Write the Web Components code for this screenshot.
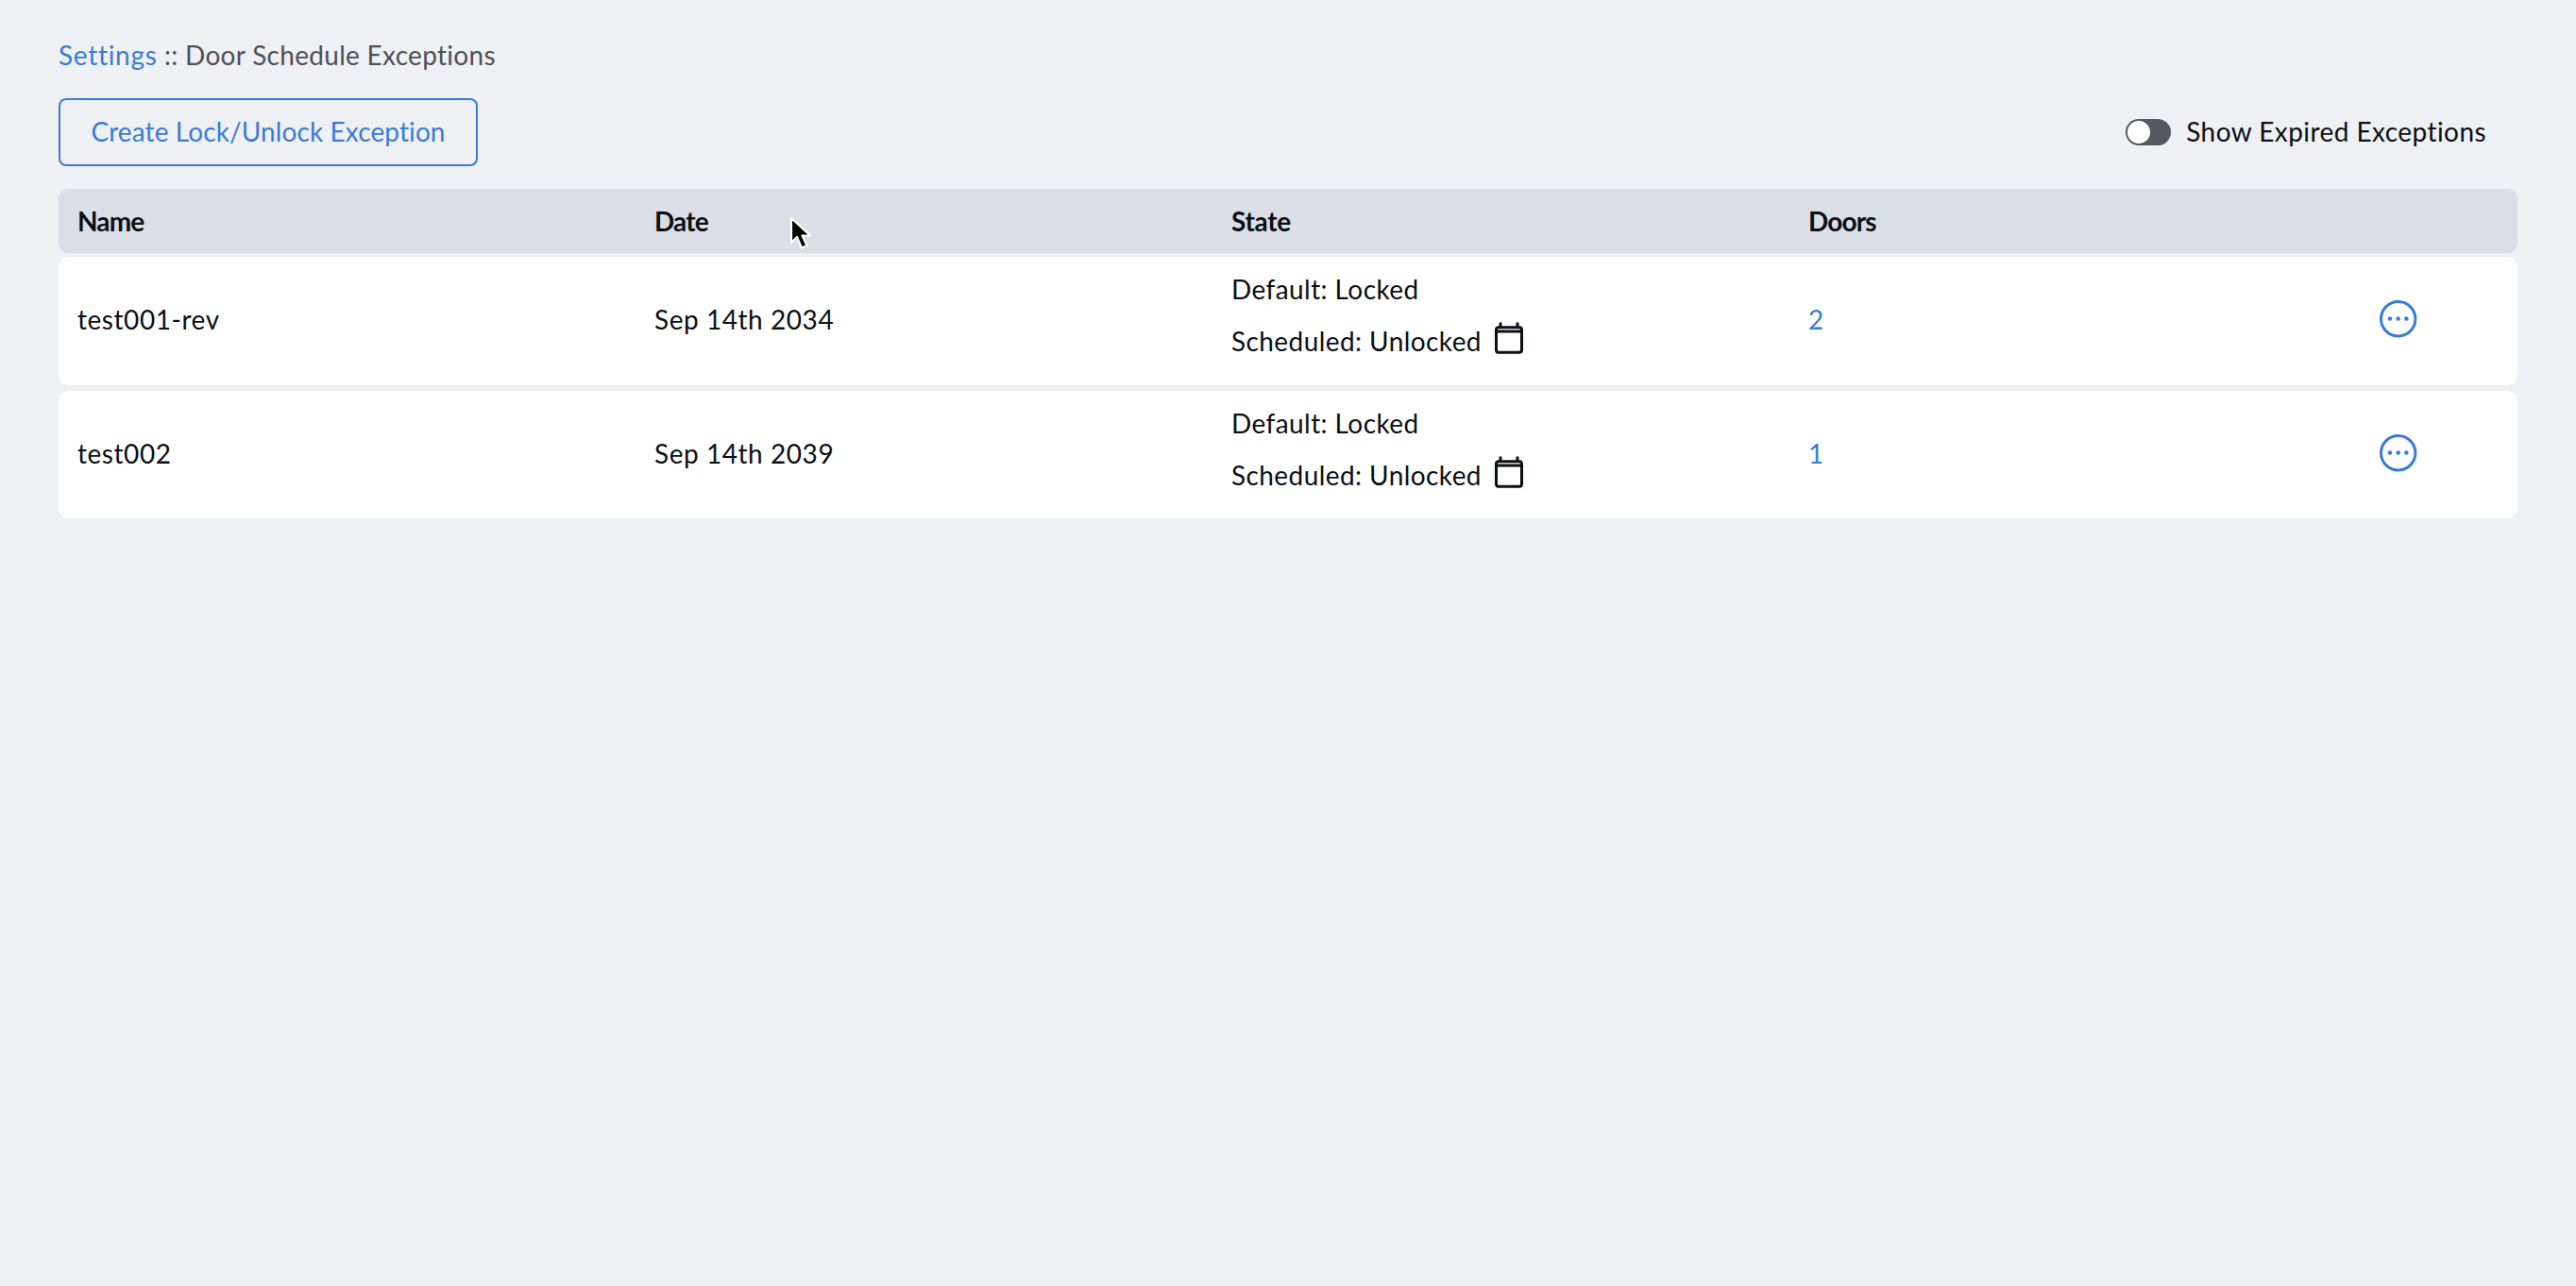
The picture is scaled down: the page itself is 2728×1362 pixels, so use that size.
<!DOCTYPE html>
<html lang="en"><head><meta charset="utf-8"><title>Door Schedule Exceptions</title>
<style>
html,body{margin:0;height:100%}
body{background:#eff0f4;font:28px/40px Lato,"Noto Sans",sans-serif;color:#0c0f14;min-height:1362px;position:relative}
</style></head><body>
<exceptions-page></exceptions-page>
<template id="row-tpl">
<style>
:host{display:grid;grid-template-columns:611px 611px 611px 605px 40px;align-items:center;background:#fff;border-radius:10px;padding:0 20px 4px;height:135.5px;box-sizing:border-box;letter-spacing:.55px}
:host(:last-child){padding-bottom:2px}
.st{display:flex;flex-direction:column;gap:15px;margin-bottom:9px;letter-spacing:.42px}
.sch{display:flex;align-items:center;gap:14px;height:40px}
.sch svg{margin-bottom:6px}
.doors{color:#3a7bd5}
svg{display:block}
</style>
<div><slot name="name"></slot></div><div><slot name="date"></slot></div>
<div class="st"><div>Default: Locked</div><div class="sch"><span>Scheduled: Unlocked</span>
<svg width="30" height="34" viewBox="0 0 30 34" fill="none" stroke="#0c0f14" stroke-width="3"><rect x="1.5" y="5.8" width="27" height="26.4" rx="2.5"/><path d="M1.5 10h27M6 .5v5M24 .5v5"/></svg></div></div>
<div class="doors"><slot name="doors"></slot></div>
<svg width="40" height="40" viewBox="0 0 40 40" fill="none"><circle cx="19.7" cy="19.7" r="18.2" stroke="#3a7bd5" stroke-width="3"/><circle cx="11" cy="19.5" r="2.3" fill="#3a7bd5"/><circle cx="19.7" cy="19.5" r="2.3" fill="#3a7bd5"/><circle cx="28.4" cy="19.5" r="2.3" fill="#3a7bd5"/></svg>
</template>
<script>
class ExceptionRow extends HTMLElement{constructor(){super();this.attachShadow({mode:'open'}).append(document.getElementById('row-tpl').content.cloneNode(true))}}
customElements.define('exception-row',ExceptionRow);
class ExceptionsPage extends HTMLElement{constructor(){super();const s=this.attachShadow({mode:'open'});s.innerHTML=`<style>
:host{display:block;padding:38px 62px 0}
.crumb{color:#4d5157;height:40px;line-height:40px;letter-spacing:.3px}.crumb a{color:#3a7bd5;text-decoration:none;letter-spacing:.7px}
.bar{display:flex;justify-content:space-between;align-items:center;margin-top:26px;padding-right:33px}
.btn{height:72px;width:444px;box-sizing:border-box;border:2px solid #3a7bd5;border-radius:8px;color:#3a7bd5;background:none;font:inherit;padding:0 0 3px;letter-spacing:.1px}
.tg{display:flex;align-items:center;gap:16px;letter-spacing:.43px}
.tg span{padding-bottom:2px}
.sw{width:48px;height:28px;border-radius:14px;background:#55585d;position:relative}
.sw:after{content:"";position:absolute;left:1.5px;top:2px;width:24.5px;height:24px;border-radius:50%;background:#fff}
.head{display:grid;grid-template-columns:611px 611px 611px 1fr;align-items:center;height:68px;background:#dbdfe5;border-radius:10px;padding:0 20px;font-weight:700;letter-spacing:-.85px;margin-top:24px;margin-bottom:4px}
.head .state{letter-spacing:-.3px}
.rows{display:flex;flex-direction:column;gap:6px}
.cur{position:absolute;left:836px;top:229px}
</style>
<div class="crumb"><a>Settings</a> <span>:: Door Schedule Exceptions</span></div>
<div class="bar"><button class="btn">Create Lock/Unlock Exception</button><div class="tg"><div class="sw"></div><span>Show Expired Exceptions</span></div></div>
<div class="head"><div>Name</div><div>Date</div><div class="state">State</div><div>Doors</div></div>
<div class="rows"><exception-row><span slot="name">test001-rev</span><span slot="date">Sep 14th 2034</span><span slot="doors">2</span></exception-row>
<exception-row><span slot="name">test002</span><span slot="date">Sep 14th 2039</span><span slot="doors">1</span></exception-row></div>
<svg class="cur" width="26" height="38" viewBox="0 0 26 38"><path d="M2 2v26l6-6 5 11.500 5.500-2.500-5-10.500h8.500z" fill="#000" stroke="#fff" stroke-width="2.200" stroke-linejoin="round"/></svg>`;}}
customElements.define('exceptions-page',ExceptionsPage);
</script></body></html>
